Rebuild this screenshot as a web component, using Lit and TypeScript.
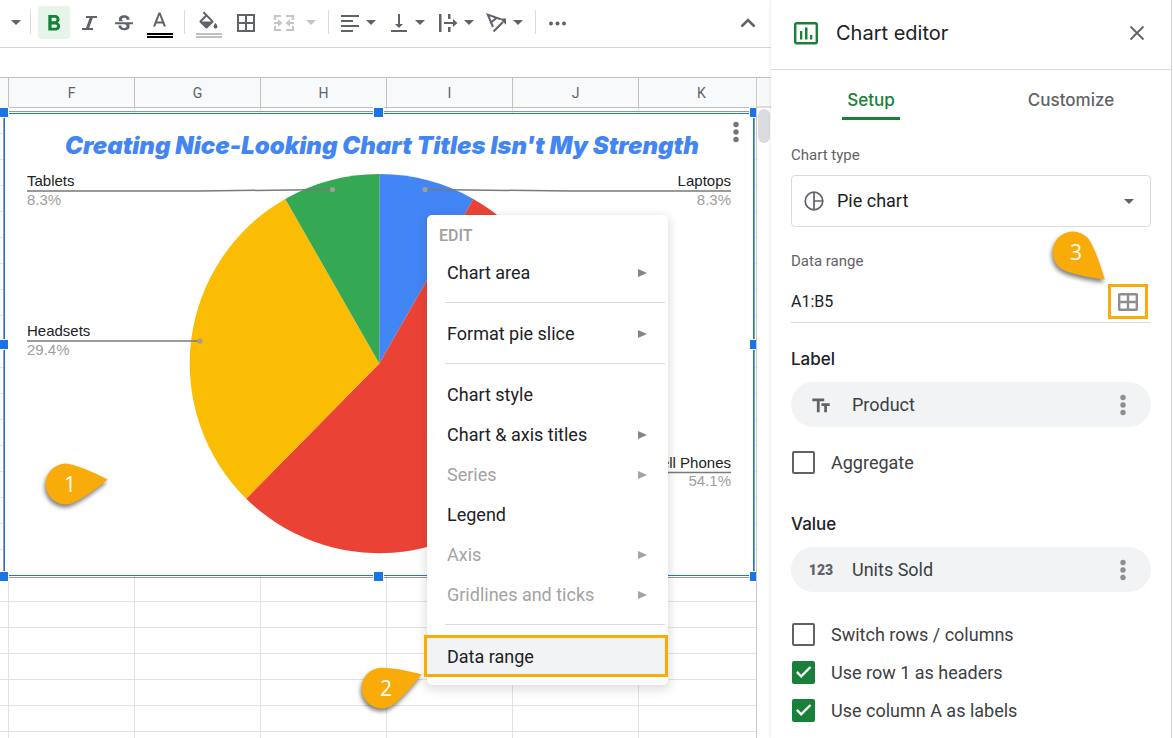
import { LitElement, html, svg, css, nothing } from "lit";
import { customElement, property } from "lit/decorators.js";
import { classMap } from "lit/directives/class-map.js";

const CARET = svg`<path d="M0 0h10L5 5z" fill="currentColor" />`;

const ICONS: Record<string, unknown> = {
  italic: svg`<path d="M9 5h11v2h-4.2l-3.6 10H16v2H5v-2h4l3.6-10H9z" />`,
  bold: svg`<path d="M15.6 10.79c.97-.67 1.65-1.77 1.65-2.79 0-2.26-1.75-4-4-4H7v14h7.04c2.09 0 3.71-1.7 3.71-3.79 0-1.52-.86-2.82-2.15-3.42zM10 6.5h3c.83 0 1.5.67 1.5 1.5s-.67 1.5-1.5 1.5h-3v-3zm3.5 9H10v-3h3.5c.83 0 1.5.67 1.5 1.5s-.67 1.5-1.5 1.5z" transform="translate(-1.4 -0.3) scale(1.1)" />`,
  strike: svg`<path d="M6.85 7.08C6.85 4.37 9.45 3 12.24 3c1.64 0 3 .49 3.9 1.28.77.65 1.46 1.73 1.46 3.24h-3.01c0-.31-.05-.59-.15-.85-.29-.86-1.2-1.28-2.25-1.28-1.86 0-2.34 1.02-2.34 1.7 0 .48.25.88.74 1.21.38.25.77.48 1.41.7H7.39c-.21-.34-.54-.89-.54-1.92zM21 12v-2H3v2h9.62c1.15.45 1.96.75 1.96 1.97 0 1-.81 1.67-2.28 1.67-1.54 0-2.93-.54-2.93-2.51H6.4c0 .55.08 1.13.24 1.58.81 2.29 3.29 3.3 5.67 3.3 2.27 0 5.3-.89 5.3-4.05 0-.3-.01-1.16-.48-1.94H21V12z" transform="translate(0 1.3)" />`,
  borders: svg`<path d="M3 3v18h18V3H3zm8 16H5v-6h6v6zm0-8H5V5h6v6zm8 8h-6v-6h6v6zm0-8h-6V5h6v6z" />`,
  merge: svg`<path d="M3 9V5h6M14 5h7v4M21 15v4h-7M9 19H3v-4M2 12h6M22 12h-6" fill="none" stroke="currentColor" stroke-width="2.2" /><path d="M6 8.200 10.500 12 6 15.800zM18 8.200 13.500 12l4.500 3.800z" />`,
  align: svg`<path d="M3 4h18v2H3zM3 9h12v2H3zM3 14h18v2H3zM3 19h12v2H3z" />`,
  bottom: svg`<path d="M16 13h-3V3h-2v10H8l4 4 4-4zM4 19v2h16v-2H4z" />`,
  wrap: svg`<path d="M3 3h2.500v18H3zM12 3h2.500v5H12zM12 16h2.500v5H12zM8 11h9V8l4.500 4L17 16v-3H8z" />`,
  rotate: svg`<path d="M15.700 8.200 2.800 3.600 8 16M6 11.500l6-5" fill="none" stroke="currentColor" stroke-width="2" /><path d="M8.500 20.500 18 11" fill="none" stroke="currentColor" stroke-width="2.200" /><path d="M21 7.500v6.300L14.800 7.500z" />`,
  more: svg`<circle cx="6" cy="12.500" r="2" /><circle cx="12.500" cy="12.500" r="2" /><circle cx="19" cy="12.500" r="2" />`,
  up: svg`<path d="M5.500 15.500 12 9l6.500 6.500" fill="none" stroke="currentColor" stroke-width="2.500" />`,
  close: svg`<path d="M5.500 5.500l13 13M18.500 5.500l-13 13" fill="none" stroke="currentColor" stroke-width="1.800" />`,
  report: svg`<rect x="1.200" y="2.200" width="21.600" height="20" rx="1.500" fill="none" stroke="currentColor" stroke-width="2.400" /><path d="M6 10h2.300v8.500H6zM11 6.500h2.500v12H11zM16 14h2.300v4.500H16z" />`,
  pie: svg`<circle cx="12" cy="12" r="8.800" fill="none" stroke="currentColor" stroke-width="1.700" /><path d="M12 3v18M12 12h9" fill="none" stroke="currentColor" stroke-width="1.700" />`,
  caps: svg`<path d="M2.500 5v3h5v12h3V8h5V5h-13zM21.500 10h-9v3h3v7h3v-7h3z" />`,
};

const icon = (name: string) =>
  html`<svg class="icon" viewBox="0 0 24 24" fill="currentColor" aria-hidden="true">${ICONS[name]}</svg>`;

const caret = () =>
  html`<svg class="caret" viewBox="0 0 10 5" aria-hidden="true">${CARET}</svg>`;

const dots = () =>
  html`<svg class="dots" viewBox="0 0 6 22" fill="currentColor" aria-hidden="true">
    <circle cx="3" cy="3.500" r="2.700" /><circle cx="3" cy="11" r="2.700" /><circle cx="3" cy="18.500" r="2.700" />
  </svg>`;

const base = css`
  :host, * { box-sizing: border-box; }
  button {
    font: inherit; color: inherit; background: none; border: 0; margin: 0; padding: 0;
    display: flex; align-items: center; justify-content: center; cursor: pointer;
  }
  svg { display: block; flex: none; }
  .icon { width: 24px; height: 24px; }
  .caret { width: 10px; height: 5px; }
  .dots { width: 6px; height: 22px; }
`;

@customElement("sheet-toolbar")
class SheetToolbar extends LitElement {
  static styles = [base, css`
    :host {
      display: flex; padding: 6px 11px 8px; height: 48px; color: #5f6368;
      border-bottom: 1px solid #d4d6d9; background: #fff;
    }
    .group { display: flex; gap: 3px; }
    .wide { gap: 6px; }
    .menus { gap: 11px; }
    .tool { width: 32px; height: 33px; border-radius: 3px; }
    .active { background: #e6f4ea; color: #188038; }
    .faded { color: #c3c5c7; }
    .drop { gap: 4px; }
    .sep { width: 1px; margin: 4px 7px 5px 9px; background: #dadce0; }
    .sep.roomy { margin-left: 12px; margin-right: 9px; }
    .end { margin-left: auto; }
    .tint { width: 32px; height: 33px; }
  `];

  render() {
    const drop = (name: string, label: string) =>
      html`<button class="drop" aria-label=${label}>${icon(name)}${caret()}</button>`;
    return html`
      <button aria-label="Font size">${caret()}</button>
      <span class="sep"></span>
      <div class="group">
        <button class="tool active" aria-label="Bold">${icon("bold")}</button>
        <button class="tool" aria-label="Italic">${icon("italic")}</button>
        <button class="tool" aria-label="Strikethrough">${icon("strike")}</button>
        <button class="tool" aria-label="Text color">
          <svg class="tint" viewBox="0 0 32 33" fill="currentColor">
            <path transform="translate(4.5 3.5)" d="M11 3L5.500 17h2.250l1.120-3h6.250l1.120 3h2.250L13 3h-2zm-1.380 9L12 5.670 14.380 12H9.620z" />
            <path d="M4 27h26v2H4zM4 30h26v2H4z" fill="#000" />
          </svg>
        </button>
      </div>
      <span class="sep"></span>
      <div class="group wide">
        <button class="tool" aria-label="Fill color">
          <svg class="tint" viewBox="0 0 32 33" fill="currentColor">
            <path transform="translate(4.5 5.5)" d="M16.560 8.940L7.620 0 6.210 1.410l2.380 2.380-5.150 5.150c-.590.590-.590 1.540 0 2.120l5.500 5.500c.290.290.680.440 1.060.440s.770-.150 1.060-.440l5.500-5.500c.590-.580.590-1.530 0-2.120zM5.210 10L10 5.210 14.790 10H5.210zM19 11.500s-2 2.170-2 3.500c0 1.100.900 2 2 2s2-.900 2-2c0-1.330-2-3.500-2-3.500z" />
            <path d="M4 27h26v2H4zM4 30h26v2H4z" fill="#c0c0c0" />
          </svg>
        </button>
        <button class="tool" aria-label="Borders">${icon("borders")}</button>
        <button class="tool faded" aria-label="Merge cells">${icon("merge")}</button>
        <button class="faded" aria-label="Merge type">${caret()}</button>
      </div>
      <span class="sep roomy"></span>
      <div class="group menus">
        ${drop("align", "Horizontal align")}${drop("bottom", "Vertical align")}
        ${drop("wrap", "Text wrapping")}${drop("rotate", "Text rotation")}
      </div>
      <span class="sep roomy"></span>
      <button aria-label="More">${icon("more")}</button>
      <button class="end" aria-label="Hide the menus">${icon("up")}</button>
    `;
  }
}

interface Slice { name: string; units: number; color: string; }

const SLICES: Slice[] = [
  { name: "Laptops", units: 9, color: "#4285f4" },
  { name: "Cell Phones", units: 59, color: "#ea4335" },
  { name: "Headsets", units: 32, color: "#fbbc04" },
  { name: "Tablets", units: 9, color: "#34a853" },
];

@customElement("pie-chart")
class PieChart extends LitElement {
  static styles = [base, css`
    :host { display: block; position: relative; padding: 1px 0; border: 1px solid #999; }
    .frame { background: #fff; border: 1px solid #1a73e8; }
    .plot { width: 748px; height: 461px; font: 15px "Liberation Sans", Arial, sans-serif; }
    .title { font: italic 900 24px Inter, "Liberation Sans", sans-serif; fill: #4285f4; }
    .name { fill: #222; }
    .share { fill: #9e9e9e; }
    .leader { fill: none; stroke: #7a7a7a; stroke-width: 1.5; }
    .end { text-anchor: end; }
    .kebab { position: absolute; top: 9px; right: 15px; color: #757575; }
    .handle {
      position: absolute; width: 11px; height: 11px; background: #1a73e8; border: 1px solid #fff;
    }
    .n { top: -5px; } .s { bottom: -5px; } .w { left: -6px; } .e { right: -6px; }
    .mx { left: calc(50% - 6px); } .my { top: calc(50% - 6px); }
  `];

  private wedges() {
    const [cx, cy, r] = [374.3, 249.6, 189.6];
    const total = SLICES.reduce((n, s) => n + s.units, 0);
    let turn = 0;
    return SLICES.map((s) => {
      const at = (t: number) =>
        `${cx + r * Math.sin(t * 2 * Math.PI)} ${cy - r * Math.cos(t * 2 * Math.PI)}`;
      const from = turn;
      turn += s.units / total;
      const big = s.units / total > 0.5 ? 1 : 0;
      return svg`<path d="M${cx} ${cy}L${at(from)}A${r} ${r} 0 ${big} 1 ${at(turn)}z" fill=${s.color} />`;
    });
  }

  private label(i: number, x: number, y: number, lower: number) {
    const total = SLICES.reduce((n, s) => n + s.units, 0);
    const share = ((SLICES[i].units / total) * 100).toFixed(1) + "%";
    const side = x > 374 ? "end" : "";
    return svg`<text class="name ${side}" x=${x} y=${y}>${SLICES[i].name}</text>
      <text class="share ${side}" x=${x} y=${lower}>${share}</text>`;
  }

  render() {
    return html`
      <div class="frame">
        <svg class="plot" viewBox="0 0 748 461">
          ${this.wedges()}
          <text class="title" x="377" y="40" text-anchor="middle">Creating Nice-Looking Chart Titles Isn't My Strength</text>
          <path class="leader" d="M22 77h172L327 75.500M726 77H565L420 75.500M22 227h172M726 358.500H560" />
          <g fill="#9e9e9e">
            <circle cx="327.500" cy="75.500" r="2.600" /><circle cx="420" cy="75.500" r="2.600" />
            <circle cx="195" cy="227" r="2.600" />
          </g>
          ${this.label(3, 22, 72, 91)}${this.label(0, 726, 72, 91)}
          ${this.label(2, 22, 222, 241)}${this.label(1, 726, 354, 372)}
        </svg>
      </div>
      <button class="kebab" aria-label="Chart options">${dots()}</button>
      ${["n w", "n mx", "n e", "my w", "my e", "s w", "s mx", "s e"].map(
        (at) => html`<span class="handle ${at}"></span>`)}
    `;
  }
}

type Entry = { text: string; sub?: boolean; off?: boolean; marked?: boolean } | null;

const ENTRIES: Entry[] = [
  { text: "Chart area", sub: true },
  null,
  { text: "Format pie slice", sub: true },
  null,
  { text: "Chart style" },
  { text: "Chart & axis titles", sub: true },
  { text: "Series", sub: true, off: true },
  { text: "Legend" },
  { text: "Axis", sub: true, off: true },
  { text: "Gridlines and ticks", sub: true, off: true },
  null,
  { text: "Data range", marked: true },
];

@customElement("chart-menu")
class ChartMenu extends LitElement {
  static styles = [base, css`
    :host {
      display: block; width: 241px; padding: 5px 0 8px; background: #fff; border-radius: 5px;
      box-shadow: 0 3px 10px 2px rgba(60, 64, 67, .16); color: #202124;
      font: 18px/24px Roboto, "Liberation Sans", sans-serif;
    }
    .head { padding-left: 12px; font-size: 16px; font-weight: 500; line-height: 32px; color: #9e9e9e; }
    .item { width: 100%; height: 40px; padding: 2px 21px 0 20px; justify-content: space-between; }
    .item:disabled { color: #a3a3a3; }
    .rule { margin: 10px 3px 10px 18px; height: 1px; background: #dadce0; }
    .arrow { width: 9px; height: 8px; color: #80868b; }
    .item:disabled .arrow { color: #a3a3a3; }
    .marked {
      width: auto; min-width: calc(100% + 3px); height: 42px; margin-left: -3px;
      background: #f1f3f4; border: 3px solid #f9ab0a;
    }
  `];

  render() {
    return html`
      <div class="head">EDIT</div>
      <div role="menu">
        ${ENTRIES.map((e) => e === null
          ? html`<div class="rule" role="separator"></div>`
          : html`<button role="menuitem" class=${classMap({ item: true, marked: !!e.marked })} ?disabled=${!!e.off}>
              <span>${e.text}</span>
              ${e.sub
                ? html`<svg class="arrow" viewBox="0 0 9 8" fill="currentColor"><path d="M0 0l9 4-9 4z" /></svg>`
                : nothing}
            </button>`)}
      </div>
    `;
  }
}

@customElement("step-pin")
class StepPin extends LitElement {
  @property({ type: Number }) step = 1;
  @property({ type: Number }) angle = 0;
  @property({ type: Number }) reach = 42;

  static styles = [base, css`
    :host { display: block; width: 90px; height: 90px; pointer-events: none; }
    .pin { width: 90px; height: 90px; }
    .drop { filter: drop-shadow(-1px 3px 2px rgba(0, 0, 0, .5)); }
    .number { font: 21px "Open Sans", sans-serif; fill: #fff; text-anchor: middle; }
  `];

  render() {
    const tip = this.reach;
    const rad = (this.angle * Math.PI) / 180;
    return html`<svg class="pin" viewBox="-45 -45 90 90">
      <g class="drop">
        <path transform="rotate(${this.angle})" fill="#f9ab0a"
          d="M2 20.300A20.400 20.400 0 1 1 2 -20.300Q14 -18 ${tip} 0Q14 18 2 20.300z" />
      </g>
      <text class="number" x=${Math.round(4 * Math.cos(rad))} y="8">${this.step}</text>
    </svg>`;
  }
}

@customElement("chart-editor")
class ChartEditor extends LitElement {
  static styles = [base, css`
    :host {
      display: block; background: #fff; color: #3c4043; padding-right: 1px;
      font: 18px/20px Roboto, "Liberation Sans", sans-serif;
    }
    .panel { min-height: 100%; border-right: 1px solid #cfd1d4; }
    .top {
      display: flex; align-items: center; height: 70px; padding: 0 22px 4px 23px;
      border-bottom: 1px solid #dadce0; color: #5f6368;
    }
    .logo { color: #188038; display: flex; }
    h1 { flex: 1; margin: 0 0 0 18px; font: 400 20px/24px Inter, sans-serif; color: #202124; }
    .tabs { display: grid; grid-template-columns: 1fr 1fr; justify-items: center; height: 50px; }
    .tab { font: 500 17px/20px Inter, sans-serif; color: #5f6368; padding: 20px 5px 7px; border-bottom: 3px solid transparent; }
    .tab.on { color: #188038; border-bottom-color: #188038; }
    .form { display: flex; flex-direction: column; padding: 25px 20px 0; }
    .caption { font-size: 15px; color: #5f6368; margin-bottom: 10px; }
    .pick { display: grid; grid-template-columns: 45px 1fr 45px; align-items: center; justify-items: center; color: #5f6368; margin-bottom: 24px; }
    .pick > * { grid-row: 1; }
    .pick select {
      grid-column: 1 / -1; width: 100%; height: 52px; padding: 0 45px; appearance: none;
      border: 1px solid #dadce0; border-radius: 4px; background: #fff;
      font: inherit; color: #202124;
    }
    .pick .icon { grid-column: 1; z-index: 1; pointer-events: none; }
    .pick .caret { grid-column: 3; z-index: 1; pointer-events: none; }
    .range { display: flex; align-items: center; height: 42px; padding-right: 3px; border-bottom: 1px solid #dadce0; margin-bottom: 26px; }
    .range input { flex: 1; min-width: 0; border: 0; padding: 0; font: 16px/20px Roboto, sans-serif; color: #202124; background: none; outline: none; }
    .select-range { width: 40px; height: 35px; border: 3px solid #f9ab0a; color: #8e8e8e; }
    .grid-icon { width: 20px; height: 18px; }
    h2 { margin: 0 0 13px; font: 500 17px/20px Inter, sans-serif; color: #202124; }
    .chip { display: flex; align-items: center; height: 45px; padding: 0 25px 0 18px; border-radius: 23px; background: #f1f3f4; }
    .chip .kind { width: 24px; margin-right: 19px; color: #5f6368; display: flex; justify-content: center; }
    .chip .kind .icon { width: 22px; height: 22px; }
    .digits { font: 900 14px/20px Roboto, sans-serif; }
    .chip .text { flex: 1; }
    .chip .dots { color: #8e8e8e; }
    .check { display: flex; align-items: center; height: 23px; gap: 16px; padding-left: 1px; }
    .check input {
      appearance: none; width: 23px; height: 23px; margin: 0; border: 2px solid #5f6368;
      border-radius: 2px; display: grid; place-items: center;
    }
    .check input:checked { background: #188038; border-color: #188038; }
    .check input:checked::before {
      content: ""; width: 17px; height: 14px; background: #fff;
      clip-path: polygon(6% 51%, 16% 40%, 36% 66%, 86% 6%, 96% 16%, 36% 90%);
    }
    .solo { margin: 24px 0 40px; }
    .options { display: flex; flex-direction: column; gap: 15px; margin-top: 31px; }
  `];

  render() {
    const check = (text: string, on = false) =>
      html`<label class="check"><input type="checkbox" ?checked=${on} /><span>${text}</span></label>`;
    return html`
      <div class="panel">
        <header class="top">
          <span class="logo">${icon("report")}</span>
          <h1>Chart editor</h1>
          <button aria-label="Close">${icon("close")}</button>
        </header>
        <div class="tabs" role="tablist">
          <button class="tab on" role="tab" aria-selected="true">Setup</button>
          <button class="tab" role="tab" aria-selected="false">Customize</button>
        </div>
        <div class="form">
          <label class="caption" for="type">Chart type</label>
          <div class="pick">
            <select id="type"><option>Pie chart</option></select>
            ${icon("pie")}${caret()}
          </div>
          <label class="caption" for="range">Data range</label>
          <div class="range">
            <input id="range" type="text" .value=${"A1:B5"} />
            <button class="select-range" aria-label="Select data range">
              <svg class="grid-icon" viewBox="0 0 20 18" fill="none" stroke="currentColor" stroke-width="2.400">
                <rect x="1.200" y="1.200" width="17.600" height="15.600" rx="0.500" /><path d="M10 1v16M1 9h18" />
              </svg>
            </button>
          </div>
          <h2>Label</h2>
          <div class="chip">
            <span class="kind">${icon("caps")}</span><span class="text">Product</span>
            <button aria-label="Label options">${dots()}</button>
          </div>
          <div class="solo">${check("Aggregate")}</div>
          <h2>Value</h2>
          <div class="chip">
            <span class="kind digits">123</span><span class="text">Units Sold</span>
            <button aria-label="Value options">${dots()}</button>
          </div>
          <div class="options">
            ${check("Switch rows / columns")}
            ${check("Use row 1 as headers", true)}
            ${check("Use column A as labels", true)}
          </div>
        </div>
      </div>
    `;
  }
}

@customElement("app-root")
class AppRoot extends LitElement {
  static styles = [base, css`
    :host {
      display: flex; height: 100vh; overflow: hidden; background: #fff;
      font-family: Roboto, "Liberation Sans", sans-serif;
    }
    .work { position: relative; flex: 1; min-width: 0; display: flex; flex-direction: column; }
    .formula { flex: none; height: 29px; }
    .sheet { flex: 1; min-height: 0; display: flex; border-top: 1px solid #c0c0c0; }
    .cells { position: relative; flex: 1; min-width: 0; overflow: hidden; border-right: 1px solid #c8cacc; }
    table { width: 765px; min-width: 100%; table-layout: fixed; border-collapse: separate; border-spacing: 0; }
    th, td { height: 26px; padding: 0; border: solid #e2e2e2; border-width: 0 1px 1px 0; }
    th { height: 30px; font-size: 14px; font-weight: 400; color: #5f6368; background: #f8f9fa; border-color: #c0c0c0; }
    .gutter { width: 9px; }
    .bar { width: 14px; background: #fff; }
    .bar-top { height: 30px; background: #f8f9fa; border-bottom: 2px solid #dadce0; }
    .thumb { height: 34px; margin: 1px 1px 0; border-radius: 6px; background: #dadce0; }
    pie-chart { position: absolute; left: 3px; top: 33px; z-index: 1; width: 752px; }
    chart-menu { position: absolute; left: 427px; top: 215px; z-index: 2; }
    step-pin { position: absolute; z-index: 3; }
    .one { left: 21px; top: 439px; }
    .two { left: 337px; top: 643px; }
    .three { left: 257px; top: 207px; }
    .side { position: relative; z-index: 2; flex: none; width: 402px; box-shadow: 0 0 4px rgba(60, 64, 67, .16); }
    chart-editor { height: 100%; overflow: hidden; }
  `];

  render() {
    const columns = ["F", "G", "H", "I", "J", "K"];
    return html`
      <main class="work">
        <sheet-toolbar></sheet-toolbar>
        <div class="formula"></div>
        <div class="sheet">
          <div class="cells">
            <table>
              <thead>
                <tr><th class="gutter"></th>${columns.map((c) => html`<th scope="col">${c}</th>`)}</tr>
              </thead>
              <tbody>
                ${Array.from({ length: 40 }, () =>
                  html`<tr><td></td>${columns.map(() => html`<td></td>`)}</tr>`)}
              </tbody>
            </table>
            <pie-chart></pie-chart>
          </div>
          <div class="bar"><div class="bar-top"></div><div class="thumb"></div></div>
        </div>
        <chart-menu></chart-menu>
        <step-pin class="one" .step=${1} .angle=${-6}></step-pin>
        <step-pin class="two" .step=${2} .angle=${-19}></step-pin>
      </main>
      <aside class="side">
        <chart-editor></chart-editor>
        <step-pin class="three" .step=${3} .angle=${41}></step-pin>
      </aside>
    `;
  }
}
